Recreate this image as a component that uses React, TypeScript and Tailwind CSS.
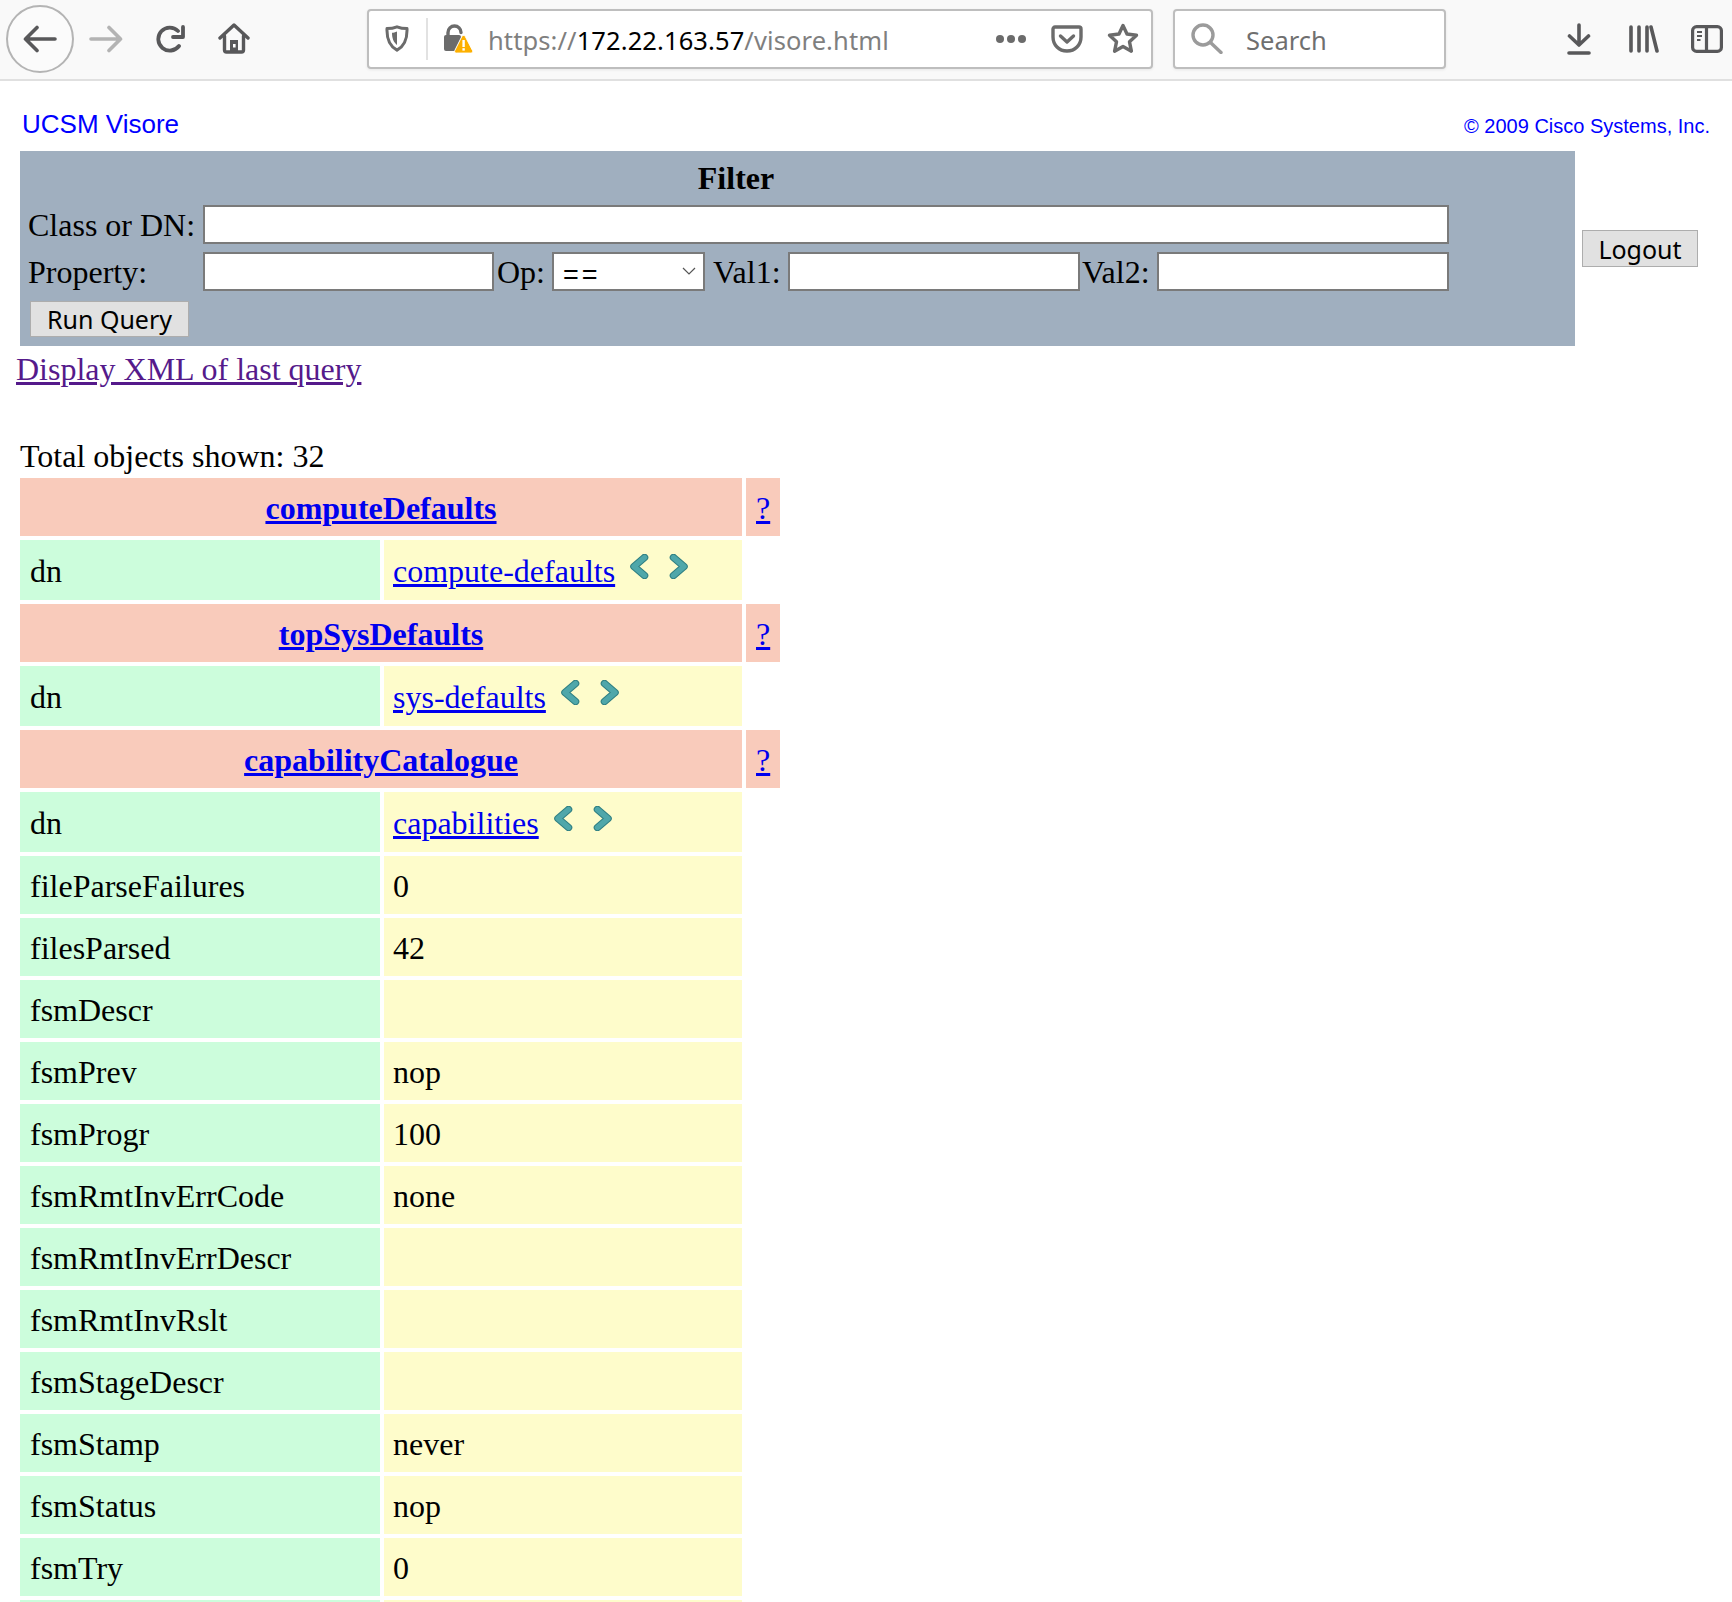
import React from "react";

const Chevrons = () => (
  <span className="flex items-center ml-[14px] mb-[10px] gap-[20px]">
    <svg width="20" height="25" viewBox="0 0 20 25">
      <path d="M15.5 3.5 L5 12.5 L15.5 21.5" fill="none" stroke="#2f7f82" strokeWidth="7.5" strokeLinejoin="round" strokeLinecap="round" />
      <path d="M15.5 3.5 L5 12.5 L15.5 21.5" fill="none" stroke="#4fa7aa" strokeWidth="5.4" strokeLinejoin="round" strokeLinecap="round" />
    </svg>
    <svg width="20" height="25" viewBox="0 0 20 25">
      <path d="M4.5 3.5 L15 12.5 L4.5 21.5" fill="none" stroke="#2f7f82" strokeWidth="7.5" strokeLinejoin="round" strokeLinecap="round" />
      <path d="M4.5 3.5 L15 12.5 L4.5 21.5" fill="none" stroke="#4fa7aa" strokeWidth="5.4" strokeLinejoin="round" strokeLinecap="round" />
    </svg>
  </span>
);

const Header = ({ name }: { name: string }) => (
  <>
    <div className="col-span-2 h-[58px] pt-[2px] bg-[#f9cbbb] flex items-center justify-center font-bold">
      <a href="#" className="text-[#0000ee] underline">{name}</a>
    </div>
    <div className="h-[58px] pt-[2px] bg-[#f9cbbb] flex items-center pl-[10px]">
      <a href="#" className="text-[#0000ee] underline">?</a>
    </div>
  </>
);

const DnRow = ({ value }: { value: string }) => (
  <>
    <div className="h-[60px] pt-[2px] bg-[#ccfddc] flex items-center pl-[10px]">dn</div>
    <div className="h-[60px] pt-[2px] bg-[#fefccb] flex items-center pl-[9px]">
      <a href="#" className="text-[#0000ee] underline">{value}</a>
      <Chevrons />
    </div>
    <div />
  </>
);

const Row = ({ name, value }: { name: string; value?: string }) => (
  <>
    <div className="h-[58px] pt-[2px] bg-[#ccfddc] flex items-center pl-[10px]">{name}</div>
    <div className="h-[58px] pt-[2px] bg-[#fefccb] flex items-center pl-[9px]">{value}</div>
    <div />
  </>
);

const rows: [string, string?][] = [
  ["fileParseFailures", "0"],
  ["filesParsed", "42"],
  ["fsmDescr"],
  ["fsmPrev", "nop"],
  ["fsmProgr", "100"],
  ["fsmRmtInvErrCode", "none"],
  ["fsmRmtInvErrDescr"],
  ["fsmRmtInvRslt"],
  ["fsmStageDescr"],
  ["fsmStamp", "never"],
  ["fsmStatus", "nop"],
  ["fsmTry", "0"],
  [""],
];

const D = "#58585a";
const G = "#6b6b6b";

const Toolbar = () => (
  <div className="h-[81px] box-border bg-[#f9f9f9] border-b-2 border-[#e0e0e0] flex items-center font-['Noto_Sans',sans-serif] pb-[2px]">
    <div className="ml-[6px] w-[68px] h-[68px] box-border rounded-full border-2 border-[#b4b4b4] bg-[#fbfbfb] flex items-center justify-center">
      <svg width="34" height="28" viewBox="0 0 34 28" fill="none" stroke={D} strokeWidth="3.6" strokeLinecap="round" strokeLinejoin="round">
        <path d="M32 14H3M14 2.5 2.5 14 14 25.5" />
      </svg>
    </div>
    <svg className="ml-[15px]" width="34" height="28" viewBox="0 0 34 28" fill="none" stroke="#b3b3b3" strokeWidth="3.6" strokeLinecap="round" strokeLinejoin="round">
      <path d="M2 14h29M20 2.5 31.5 14 20 25.5" />
    </svg>
    <svg className="ml-[32px]" width="30" height="28" viewBox="0 0 30 28" fill="none" stroke={D} strokeWidth="3.8" strokeLinecap="round" strokeLinejoin="round">
      <path d="M24 21A11.5 11.5 0 1 1 23 6" />
      <path d="M28 2v10H18" />
    </svg>
    <svg className="ml-[33px]" width="32" height="31" viewBox="0 0 32 31" fill="none" stroke={D} strokeWidth="3.4" strokeLinecap="round" strokeLinejoin="round">
      <path d="M2 15 16 2l14 13" />
      <path d="M6.5 13v14a2 2 0 0 0 2 2h15a2 2 0 0 0 2-2V13" />
      <rect x="12" y="17" width="8" height="12" fill={D} stroke="none" />
      <rect x="15" y="21" width="2.6" height="3.5" fill="#fff" stroke="none" />
    </svg>

    <div className="ml-[117px] w-[786px] h-[60px] box-border rounded-[4px] border-2 border-[#bebebe] bg-white flex items-center shadow-[0_1px_3px_rgba(0,0,0,0.08)]">
      <svg className="ml-[16px]" width="24" height="27" viewBox="0 0 24 27" fill="none">
        <path d="M12 1.8C8 3.4 5 3.6 2 3.6 1.6 14 4 21 12 25.2 20 21 22.4 14 22 3.6 19 3.6 16 3.4 12 1.8Z" stroke={G} strokeWidth="3" strokeLinejoin="round" />
        <path d="M12 6.5C10 7.3 8.5 7.7 7 7.8 7 13 8.3 17 12 20Z" fill={G} />
      </svg>
      <div className="ml-[17px] w-[2px] h-[42px] bg-[#e2e2e2]" />
      <svg className="ml-[15px]" width="30" height="30" viewBox="0 0 30 30" fill="none">
        <path d="M5 12V8.5a6.5 6.5 0 0 1 13 0" stroke={G} strokeWidth="3.4" strokeLinecap="round" />
        <rect x="1" y="11" width="17" height="16" rx="2" fill={G} />
        <path d="M20.5 11.5a2 2 0 0 1 1.8 1l7.2 14a1.8 1.8 0 0 1-1.6 2.6H13.4a1.8 1.8 0 0 1-1.6-2.6l7-14a2 2 0 0 1 1.7-1Z" fill="#fdb000" stroke="#fff" strokeWidth="1" />
        <rect x="19.4" y="16" width="2.4" height="7" fill="#fff" />
        <rect x="19.4" y="24.2" width="2.4" height="2.4" fill="#fff" />
      </svg>
      <div className="ml-[15px] pt-[3px] text-[25.5px] tracking-[0.1px] text-[#7f7f7f] whitespace-nowrap">
        https://<span className="text-black">172.22.163.57</span>/visore.html
      </div>
      <svg className="ml-auto" width="32" height="10" viewBox="0 0 32 10" fill={G}>
        <circle cx="5" cy="5" r="4" />
        <circle cx="16" cy="5" r="4" />
        <circle cx="27" cy="5" r="4" />
      </svg>
      <svg className="ml-[24px]" width="32" height="28" viewBox="0 0 32 28" fill="none" stroke={G} strokeWidth="3.4" strokeLinecap="round" strokeLinejoin="round">
        <path d="M4 2h24a2 2 0 0 1 2 2v8c0 8-6 14-14 14S2 20 2 12V4a2 2 0 0 1 2-2Z" />
        <path d="M9.5 11 16 17l6.5-6" />
      </svg>
      <svg className="ml-[24px] mr-[12px]" width="32" height="31" viewBox="0 0 32 31" fill="none" stroke={G} strokeWidth="3.4" strokeLinejoin="round">
        <path d="M16 2.5 20 11l9.5 1.2-7 6.6 1.9 9.4L16 23.5l-8.4 4.7 1.9-9.4-7-6.6L12 11Z" />
      </svg>
    </div>

    <div className="ml-[20px] w-[273px] h-[60px] box-border rounded-[4px] border-2 border-[#bebebe] bg-white flex items-center shadow-[0_1px_3px_rgba(0,0,0,0.08)]">
      <svg className="ml-[16px]" width="32" height="31" viewBox="0 0 32 31" fill="none" stroke="#9b9b9b" strokeWidth="3.4" strokeLinecap="round">
        <circle cx="12" cy="12" r="10" />
        <path d="M19.5 19.5 30 29.5" />
      </svg>
      <span className="ml-[23px] pt-[3px] text-[25.5px] text-[#6f6f6f]">Search</span>
    </div>

    <svg className="ml-[121px]" width="24" height="32" viewBox="0 0 24 32" fill="none" stroke={D} strokeWidth="3.6" strokeLinecap="round" strokeLinejoin="round">
      <path d="M12 2v20M2.5 13 12 22l9.5-9" />
      <path d="M2 30h20" />
    </svg>
    <svg className="ml-[38px]" width="30" height="28" viewBox="0 0 30 28" fill="none" stroke={D} strokeWidth="3.6" strokeLinecap="round">
      <path d="M2 2v24M10 2v24M18 2v24M22 2l6 24" />
    </svg>
    <svg className="ml-[32px]" width="32" height="28" viewBox="0 0 32 28" fill="none" stroke={D} strokeWidth="3.2" strokeLinejoin="round">
      <rect x="1.6" y="1.6" width="28.8" height="24.8" rx="4" />
      <path d="M15.5 2v24" />
      <path d="M6 7h5M6 11h5M6 15h3.5" strokeWidth="2" />
    </svg>
  </div>
);

export default function App() {
  return (
    <div className="h-[1602px] overflow-hidden bg-white text-black font-['Liberation_Serif',serif] text-[32px] leading-[37px]">
      <Toolbar />

      <div className="h-[70px] pt-[16px] pl-[22px] pr-[22px] flex items-center justify-between font-['Liberation_Sans',sans-serif] text-[#0000ff]">
        <span className="text-[26px]">UCSM Visore</span>
        <span className="text-[20px] mt-[4px]">© 2009 Cisco Systems, Inc.</span>
      </div>

      <div className="flex ml-[20px]">
        <div className="w-[1555px] h-[195px] bg-[#a0afbf] flex flex-col">
          <div className="h-[54px] pr-[123px] flex items-center justify-center font-bold">Filter</div>
          <div className="h-[39px] flex items-center">
            <span className="w-[183px] pl-[8px] pt-[1px] whitespace-nowrap">Class or DN:</span>
            <input className="w-[1246px] h-[39px] box-border bg-white border-2 border-[#7a7a7a] outline-none" />
          </div>
          <div className="h-[39px] mt-[8px] flex items-center">
            <span className="w-[183px] pl-[8px] pt-[1px]">Property:</span>
            <input className="w-[291px] h-[39px] box-border bg-white border-2 border-[#7a7a7a] outline-none" />
            <span className="w-[58px] pl-[3px] pt-[1px]">Op:</span>
            <div className="relative w-[153px] h-[39px]">
              <select className="w-full h-full box-border appearance-none bg-white border-2 border-[#7a7a7a] pl-[9px] pt-[3px] text-[27px] tracking-[3px] font-['Liberation_Sans',sans-serif] outline-none">
                <option>==</option>
              </select>
              <svg className="absolute right-[9px] top-[15px]" width="14" height="9" viewBox="0 0 14 9" fill="none" stroke="#555" strokeWidth="1.2">
                <path d="M1 1l6 6 6-6" />
              </svg>
            </div>
            <span className="w-[83px] pl-[8px] pt-[1px]">Val1:</span>
            <input className="w-[292px] h-[39px] box-border bg-white border-2 border-[#7a7a7a] outline-none" />
            <span className="w-[77px] pl-[2px] pt-[1px]">Val2:</span>
            <input className="w-[292px] h-[39px] box-border bg-white border-2 border-[#7a7a7a] outline-none" />
          </div>
          <button className="mt-[10px] ml-[10px] w-[159px] h-[36px] box-border bg-[#e1e1e1] border border-[#adadad] font-['Noto_Sans',sans-serif] text-[25px] leading-none text-black">
            Run Query
          </button>
        </div>
        <button className="ml-[7px] mt-[79px] pt-[1px] w-[116px] h-[37px] box-border bg-[#e1e1e1] border border-[#adadad] font-['Noto_Sans',sans-serif] text-[25px] leading-none text-black">
          Logout
        </button>
      </div>

      <a href="#" className="block mt-[5px] ml-[16px] w-fit text-[#551a8b] underline">
        Display XML of last query
      </a>

      <div className="mt-[50px] ml-[20px]">Total objects shown: 32</div>

      <div className="mt-[3px] ml-[20px] grid grid-cols-[360px_358px_34px] gap-[4px] w-fit">
        <Header name="computeDefaults" />
        <DnRow value="compute-defaults" />
        <Header name="topSysDefaults" />
        <DnRow value="sys-defaults" />
        <Header name="capabilityCatalogue" />
        <DnRow value="capabilities" />
        {rows.map(([n, v], i) => (
          <Row key={i} name={n} value={v} />
        ))}
      </div>
    </div>
  );
}
